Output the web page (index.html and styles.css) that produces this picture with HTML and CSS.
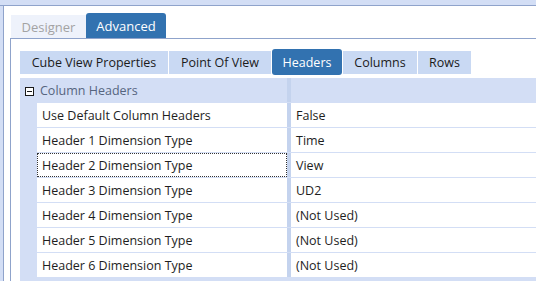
FILE: index.html
```html
<!DOCTYPE html>
<html>
<head>
<meta charset="utf-8">
<link rel="stylesheet" href="styles.css">
</head>
<body>
<div class="topband"></div>
<div class="main">
  <div class="leftstrip"></div>
  <div class="page">
    <div class="outer-tabs">
      <div class="otab designer">Designer</div>
      <div class="otab advanced">Advanced</div>
    </div>
    <div class="panel">
      <div class="inner-tabs">
        <div class="itab w1">Cube View Properties</div>
        <div class="itab w2">Point Of View</div>
        <div class="itab active w3">Headers</div>
        <div class="itab w4">Columns</div>
        <div class="itab w5">Rows</div>
      </div>
      <div class="grid">
        <div class="cat">
          <span class="minus"></span>
          <span class="cat-label">Column Headers</span>
          <span class="cat-sep"></span>
        </div>
        <div class="row"><div class="name">Use Default Column Headers</div><div class="sep"></div><div class="val">False</div></div>
        <div class="row"><div class="name">Header 1 Dimension Type</div><div class="sep"></div><div class="val">Time</div></div>
        <div class="row"><div class="name focus">Header 2 Dimension Type</div><div class="sep"></div><div class="val">View</div></div>
        <div class="row"><div class="name">Header 3 Dimension Type</div><div class="sep"></div><div class="val">UD2</div></div>
        <div class="row"><div class="name">Header 4 Dimension Type</div><div class="sep"></div><div class="val">(Not Used)</div></div>
        <div class="row"><div class="name">Header 5 Dimension Type</div><div class="sep"></div><div class="val">(Not Used)</div></div>
        <div class="row"><div class="name">Header 6 Dimension Type</div><div class="sep"></div><div class="val">(Not Used)</div></div>
      </div>
    </div>
  </div>
</div>
</body>
</html>
```
FILE: styles.css
```css
html, body {
  margin: 0;
  padding: 0;
}
body {
  width: 536px;
  height: 281px;
  overflow: hidden;
  background: #ffffff;
  font-family: "Open Sans", "Noto Sans", sans-serif;
  font-size: 12.5px;
  color: #1e1e1e;
}
.topband {
  height: 5px;
  background: #d3def5;
  border-bottom: 1px solid #8fa3cb;
}
.main {
  display: flex;
  height: 275px;
}
.leftstrip {
  width: 3px;
  background: #d3def5;
  border-right: 1px solid #8fa3cb;
  flex: none;
}
.page {
  flex: 1;
  display: flex;
  flex-direction: column;
  padding-left: 6px;
}
.outer-tabs {
  display: flex;
  align-items: flex-end;
  height: 32px;
  padding-left: 1px;
}
.otab {
  display: flex;
  align-items: center;
  justify-content: center;
  font-size: 13px;
}
.designer {
  width: 75px;
  height: 23px;
  background: #eef2fb;
  color: #a3a3a3;
}
.advanced {
  width: 80px;
  height: 25px;
  background: #3272b0;
  color: #ffffff;
  border-radius: 3px 3px 0 0;
}
.panel {
  flex: 1;
  border-top: 1px solid #8fa3cb;
  border-left: 1px solid #8fa3cb;
  padding-left: 9px;
  display: flex;
  flex-direction: column;
}
.inner-tabs {
  display: flex;
  align-items: center;
  gap: 1px;
  height: 26px;
  margin-top: 10px;
}
.itab {
  height: 23px;
  background: #c9d9f3;
  display: flex;
  align-items: center;
  justify-content: center;
  font-size: 12.5px;
  color: #1b1b1b;
}
.itab.active {
  height: 26px;
  background: #3272b0;
  color: #ffffff;
  border-radius: 3px;
}
.w1 { width: 148px; }
.w2 { width: 102px; }
.w3 { width: 70px; }
.w4 { width: 74px; }
.w5 { width: 53px; }
.grid {
  margin-top: 3px;
  background: #d3def5;
  flex: 1;
  display: flex;
  flex-direction: column;
  gap: 1px;
}
.cat {
  height: 24px;
  display: flex;
  align-items: center;
  position: relative;
}
.minus {
  width: 7px;
  height: 7px;
  border: 1px solid #1a1a1a;
  margin-left: 5px;
  margin-top: 2px;
  position: relative;
  flex: none;
  background: #ffffff;
}
.minus::after {
  content: "";
  position: absolute;
  left: 1px;
  top: 3px;
  width: 5px;
  height: 1px;
  background: #1a1a1a;
}
.cat-label {
  margin-left: 6px;
  color: #56657f;
  font-size: 12.5px;
  width: 246px;
}
.cat-sep {
  align-self: stretch;
  width: 4px;
  background: #c4d3ee;
  margin-left: 1px;
}
.row {
  height: 24px;
  display: flex;
  margin-left: 17px;
}
.name {
  width: 250px;
  background: #ffffff;
  display: flex;
  align-items: center;
  padding-left: 5px;
  box-sizing: border-box;
}
.name.focus {
  outline: 1px dotted #333333;
  outline-offset: -1px;
}
.sep {
  width: 4px;
  background: #c4d3ee;
  flex: none;
}
.val {
  flex: 1;
  background: #ffffff;
  display: flex;
  align-items: center;
  padding-left: 5px;
}
```
